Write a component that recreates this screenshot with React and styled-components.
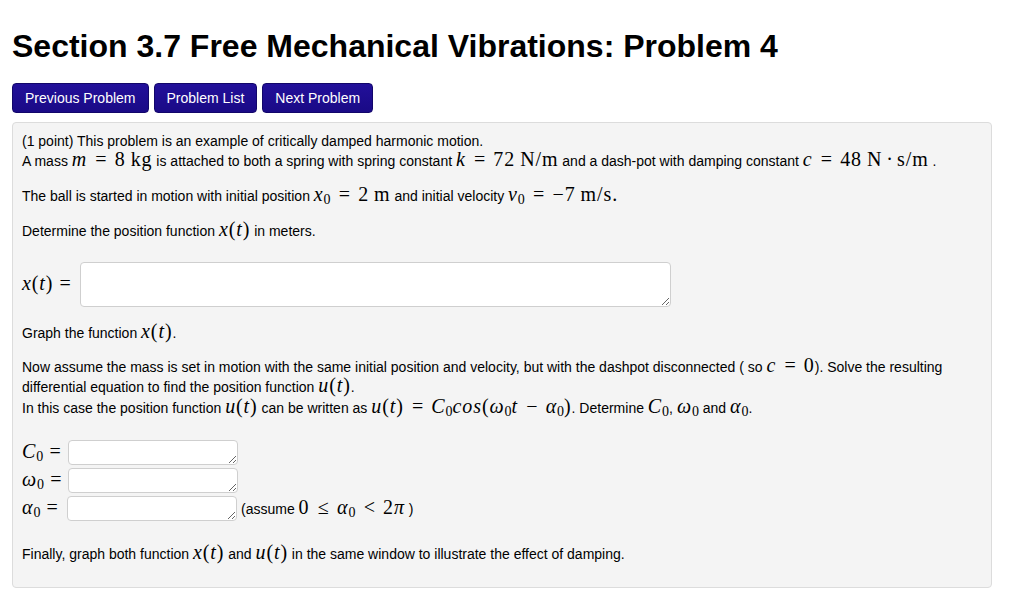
import React from "react";
import styled, { createGlobalStyle } from "styled-components";

const Global = createGlobalStyle`
  html, body { margin: 0; padding: 0; background: #fff; }
  body { font-family: "Liberation Sans", Arial, Helvetica, sans-serif; color: #000; }
`;

const Page = styled.div`
  padding: 0 31px 0 12px;
`;

const Title = styled.h1`
  margin: 0;
  padding-top: 28px;
  font-size: 32px;
  line-height: 36px;
  font-weight: bold;
`;

const Nav = styled.div`
  display: flex;
  gap: 5px;
  margin-top: 19px;
`;

const NavButton = styled.button`
  height: 30px;
  padding: 0 12px;
  border: 1px solid #12066a;
  border-radius: 4px;
  background: linear-gradient(#22109a, #1a0a86);
  color: #fff;
  font-family: "Liberation Sans", Arial, sans-serif;
  font-size: 14px;
  cursor: pointer;
`;

const Panel = styled.div`
  margin-top: 9px;
  background: #f4f4f4;
  border: 1px solid #dcdcdc;
  border-radius: 4px;
  padding: 8px 9px 8px 9px;
  font-size: 14px;
`;

const P = styled.p`
  margin: 0 0 ${(p) => p.$gap ?? 15}px;
  line-height: 20px;
`;

const Line = styled.div`
  line-height: ${(p) => p.$lh || 20}px;
`;

const M = styled.span`
  font-family: "Liberation Serif", "Times New Roman", serif;
  font-size: 20px;
  line-height: 14px;
  letter-spacing: 0.9px;
  white-space: nowrap;
`;

const I = styled.span`
  font-style: italic;
`;

const Op = styled.span`
  display: inline-block;
  min-width: ${(p) => (p.$rel ? "0.78em" : "0")};
  text-align: center;
  letter-spacing: 0;
  margin: 0 ${(p) => p.$sp ?? 6}px;
`;

const Thin = styled.span`
  display: inline-block;
  width: 5px;
`;

const Sub = styled.sub`
  font-size: 14px;
  letter-spacing: 0;
  vertical-align: -3px;
  line-height: 0;
`;

const AnswerRow = styled.div`
  display: flex;
  align-items: center;
  margin: ${(p) => p.$mt || 0}px 0 ${(p) => p.$mb || 0}px;
`;

const Label = styled.span`
  flex: 0 0 ${(p) => p.$w}px;
  white-space: nowrap;
`;

const Answer = styled.textarea`
  box-sizing: border-box;
  flex: 0 0 auto;
  width: ${(p) => p.$w}px;
  height: ${(p) => p.$h}px;
  background: #fff;
  border: 1px solid #cfcfcf;
  border-radius: 4px;
  resize: both;
  font-family: inherit;
  font-size: 13px;
  padding: 4px 6px;
  outline: none;
`;

const Hint = styled.span`
  margin-left: 4px;
`;

const Stack = styled.div`
  display: flex;
  flex-direction: column;
  gap: 3px;
  margin: 21px 0 23px;
`;

const X = () => (
  <M>
    <I>x</I>(<I>t</I>)
  </M>
);
const U = () => (
  <M>
    <I>u</I>(<I>t</I>)
  </M>
);

export default function App() {
  return (
    <>
      <Global />
      <Page>
        <Title>Section 3.7 Free Mechanical Vibrations: Problem 4</Title>
        <Nav>
          <NavButton>Previous Problem</NavButton>
          <NavButton>Problem List</NavButton>
          <NavButton>Next Problem</NavButton>
        </Nav>
        <Panel>
          <P>
            <Line>(1 point) This problem is an example of critically damped harmonic motion.</Line>
            <Line>
              A mass{" "}
              <M>
                <I>m</I>
                <Op $rel>=</Op>8<Thin />kg
              </M>{" "}
              is attached to both a spring with spring constant{" "}
              <M>
                <I>k</I>
                <Op $rel>=</Op>72<Thin />N/m
              </M>{" "}
              and a dash-pot with damping constant{" "}
              <M>
                <I>c</I>
                <Op $rel>=</Op>48<Thin />N<Op $sp={4}>·</Op>s/m
              </M>{" "}
              .
            </Line>
          </P>
          <P>
            The ball is started in motion with initial position{" "}
            <M>
              <I>x</I>
              <Sub>0</Sub>
              <Op $rel>=</Op>2<Thin />m
            </M>{" "}
            and initial velocity{" "}
            <M>
              <I>v</I>
              <Sub>0</Sub>
              <Op $rel>=</Op>−7<Thin />m/s.
            </M>
          </P>
          <P $gap={0}>
            Determine the position function <X /> in meters.
          </P>
          <AnswerRow $mt={21} $mb={16}>
            <Label $w={58}>
              <M>
                <I>x</I>(<I>t</I>)<Op $rel $sp={4}>=</Op>
              </M>
            </Label>
            <Answer $w={591} $h={45} />
          </AnswerRow>
          <P $gap={14}>
            Graph the function <X />.
          </P>
          <P $gap={0}>
            <Line>
              Now assume the mass is set in motion with the same initial position and velocity, but with the
              dashpot disconnected ( so{" "}
              <M>
                <I>c</I>
                <Op $rel>=</Op>0
              </M>
              ). Solve the resulting differential equation to find the position function <U />.
            </Line>
            <Line $lh={22}>
              In this case the position function <U /> can be written as{" "}
              <M>
                <I>u</I>(<I>t</I>)<Op $rel>=</Op>
                <I>C</I>
                <Sub>0</Sub>
                <I>cos</I>(<I>ω</I>
                <Sub>0</Sub>
                <I>t</I>
                <Op $rel>−</Op>
                <I>α</I>
                <Sub>0</Sub>)
              </M>
              . Determine{" "}
              <M>
                <I>C</I>
                <Sub>0</Sub>
              </M>
              ,{" "}
              <M>
                <I>ω</I>
                <Sub>0</Sub>
              </M>{" "}
              and{" "}
              <M>
                <I>α</I>
                <Sub>0</Sub>
              </M>
              .
            </Line>
          </P>
          <Stack>
            <AnswerRow>
              <Label $w={46}>
                <M>
                  <I>C</I>
                  <Sub>0</Sub>
                  <Op $rel $sp={4}>=</Op>
                </M>
              </Label>
              <Answer $w={170} $h={25} />
            </AnswerRow>
            <AnswerRow>
              <Label $w={45}>
                <M>
                  <I>ω</I>
                  <Sub>0</Sub>
                  <Op $rel $sp={4}>=</Op>
                </M>
              </Label>
              <Answer $w={170} $h={25} />
            </AnswerRow>
            <AnswerRow>
              <Label $w={45}>
                <M>
                  <I>α</I>
                  <Sub>0</Sub>
                  <Op $rel $sp={4}>=</Op>
                </M>
              </Label>
              <Answer $w={170} $h={25} />
              <Hint>
                (assume{" "}
                <M>
                  0<Op $rel>≤</Op>
                  <I>α</I>
                  <Sub>0</Sub>
                  <Op $rel>&lt;</Op>2<I>π</I>
                </M>{" "}
                )
              </Hint>
            </AnswerRow>
          </Stack>
          <P>
            Finally, graph both function <X /> and <U /> in the same window to illustrate the effect of damping.
          </P>
        </Panel>
      </Page>
    </>
  );
}
